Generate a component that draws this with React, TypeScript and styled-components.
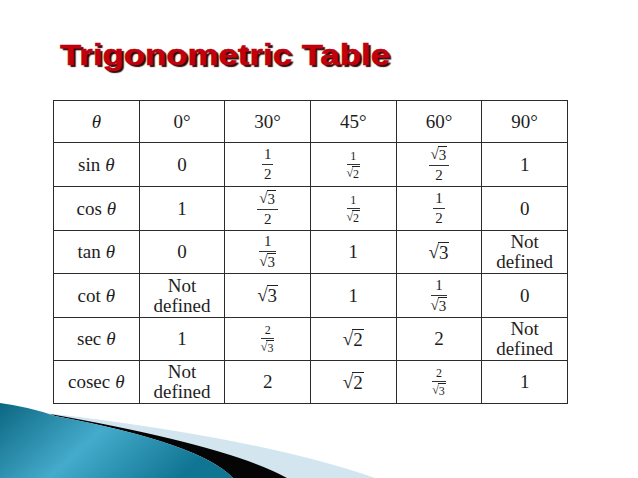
import styled, { createGlobalStyle } from "styled-components";
import type { ReactNode } from "react";

const GlobalStyle = createGlobalStyle`
  html, body {
    margin: 0;
    padding: 0;
    background: #fff;
  }
`;

const Slide = styled.div`
  position: relative;
  width: 638px;
  height: 478px;
  overflow: hidden;
  background: #fff;
  box-sizing: border-box;
  padding-top: 38px;
`;

const Title = styled.h1`
  margin: 0 0 28px 60px;
  font-family: "Liberation Sans", Arial, sans-serif;
  font-weight: bold;
  font-size: 29px;
  line-height: 34px;
  color: #c4000c;
  -webkit-text-stroke: 0.5px #b0000a;
  text-shadow: 2px 2px 1px #2e0606;
  white-space: nowrap;
  transform: scaleX(1.2);
  transform-origin: left center;
`;

const Table = styled.table`
  margin-left: 53px;
  width: 515px;
  border-collapse: collapse;
  table-layout: fixed;
  font-family: "Liberation Serif", "Times New Roman", serif;
  color: #1e1e1e;
`;

const Cell = styled.td<{ $h: number }>`
  border: 1px solid #2b2b2b;
  height: ${(p) => p.$h}px;
  padding: 0;
  text-align: center;
  vertical-align: middle;
  font-size: 19px;
  line-height: 20px;
`;

const Theta = styled.i`
  font-style: italic;
  margin-left: 5px;
`;

const Frac = styled.span<{ $size: number }>`
  display: inline-flex;
  flex-direction: column;
  align-items: center;
  vertical-align: middle;
  font-size: ${(p) => p.$size}px;
  line-height: ${(p) => Math.round(p.$size * 1.15)}px;
`;

const Num = styled.span`
  display: block;
  padding: 0 2px 1px;
  border-bottom: 1px solid #333;
  align-self: stretch;
`;

const Den = styled.span`
  display: block;
  padding-top: 1px;
`;

const Radical = styled.span`
  display: inline-flex;
  align-items: flex-start;
`;

const Radicand = styled.span`
  border-top: 1px solid #222;
  margin-left: -1px;
  padding: 0 1px;
`;

const Sqrt = ({ n }: { n: number }) => (
  <Radical>
    <span>√</span>
    <Radicand>{n}</Radicand>
  </Radical>
);

const F = ({ top, bottom, size = 15 }: { top: ReactNode; bottom: ReactNode; size?: number }) => (
  <Frac $size={size}>
    <Num>{top}</Num>
    <Den>{bottom}</Den>
  </Frac>
);

const NotDef = () => (
  <>
    Not
    <br />
    defined
  </>
);

// td height in a collapsed table adds the border, so these are 1px under the drawn rows
const heights = [41, 43, 43, 42, 43, 42, 42];

const header: ReactNode[] = [<i>θ</i>, "0°", "30°", "45°", "60°", "90°"];

const rows: ReactNode[][] = [
  [
    <>sin<Theta>θ</Theta></>,
    "0",
    <F top="1" bottom="2" />,
    <F top="1" bottom={<Sqrt n={2} />} size={12} />,
    <F top={<Sqrt n={3} />} bottom="2" />,
    "1",
  ],
  [
    <>cos<Theta>θ</Theta></>,
    "1",
    <F top={<Sqrt n={3} />} bottom="2" />,
    <F top="1" bottom={<Sqrt n={2} />} size={12} />,
    <F top="1" bottom="2" />,
    "0",
  ],
  [
    <>tan<Theta>θ</Theta></>,
    "0",
    <F top="1" bottom={<Sqrt n={3} />} />,
    "1",
    <Sqrt n={3} />,
    <NotDef />,
  ],
  [
    <>cot<Theta>θ</Theta></>,
    <NotDef />,
    <Sqrt n={3} />,
    "1",
    <F top="1" bottom={<Sqrt n={3} />} />,
    "0",
  ],
  [
    <>sec<Theta>θ</Theta></>,
    "1",
    <F top="2" bottom={<Sqrt n={3} />} size={12} />,
    <Sqrt n={2} />,
    "2",
    <NotDef />,
  ],
  [
    <>cosec<Theta>θ</Theta></>,
    <NotDef />,
    "2",
    <Sqrt n={2} />,
    <F top="2" bottom={<Sqrt n={3} />} size={12} />,
    "1",
  ],
];

const Swoosh = styled.svg`
  position: absolute;
  left: 0;
  bottom: 0;
`;

const Corner = () => (
  <Swoosh width="420" height="80" viewBox="0 0 420 80">
    <defs>
      <linearGradient id="teal" x1="0" y1="0" x2="1" y2="0.35">
        <stop offset="0" stopColor="#0c6782" />
        <stop offset="0.5" stopColor="#45abcc" />
        <stop offset="1" stopColor="#107592" />
      </linearGradient>
    </defs>
    <path d="M46,15 Q260,40 375,80 L287,80 Z" fill="#d3e6ef" />
    <path d="M50,16 Q230,48 287,80 L233,80 Q200,45 55,18 Z" fill="#050505" />
    <path d="M0,5 Q30,9 55,18 Q200,45 233,80 L0,80 Z" fill="url(#teal)" />
  </Swoosh>
);

export default function App() {
  return (
    <>
      <GlobalStyle />
      <Slide>
        <Title>Trigonometric Table</Title>
        <Table>
          <tbody>
            <tr>
              {header.map((h, i) => (
                <Cell key={i} $h={heights[0]}>
                  {h}
                </Cell>
              ))}
            </tr>
            {rows.map((r, ri) => (
              <tr key={ri}>
                {r.map((c, ci) => (
                  <Cell key={ci} $h={heights[ri + 1]}>
                    {c}
                  </Cell>
                ))}
              </tr>
            ))}
          </tbody>
        </Table>
        <Corner />
      </Slide>
    </>
  );
}
